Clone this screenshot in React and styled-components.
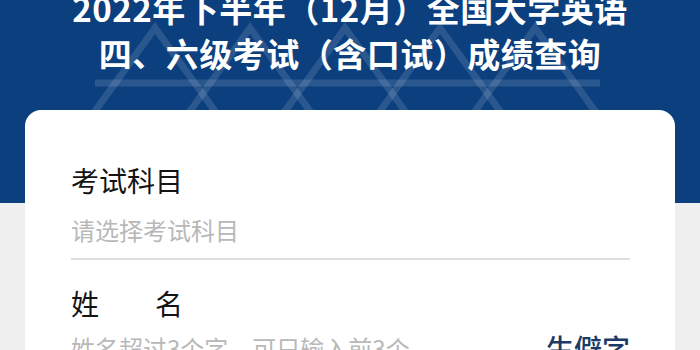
import styled, { createGlobalStyle } from 'styled-components';

const GlobalStyle = createGlobalStyle`
  html, body {
    margin: 0;
    padding: 0;
    background: #efefef;
    overflow: hidden;
  }
  body {
    font-family: "Noto Sans CJK SC", "Noto Sans", sans-serif;
  }
`;

const Page = styled.main`
  width: 700px;
  height: 350px;
  overflow: hidden;
  background: #efefef;
`;

/**
 * HEADER
 */

const Header = styled.header`
  position: relative;
  height: 203px;
  background: #0b3f7e;
  overflow: hidden;
`;

const Pattern = styled.svg`
  position: absolute;
  left: 0;
  top: 0;
`;

const Title = styled.h1`
  position: relative;
  margin: -14px 0 0;
  text-align: center;
  color: #ffffff;
  font-size: 33px;
  font-weight: 700;
  line-height: 45px;
  letter-spacing: 0.5px;
`;

/**
 * CARD
 */

const Card = styled.section`
  position: relative;
  margin: -93px 25px 0;
  height: 260px;
  padding: 50px 45px 0 46px;
  background: #ffffff;
  border-radius: 16px 16px 0 0;
  box-sizing: border-box;
`;

const Field = styled.div`
  display: flex;
  flex-direction: column;
  border-bottom: ${(props) => (props.divided ? '2px solid #dedede' : 'none')};
  padding-bottom: ${(props) => (props.divided ? '10px' : '0')};
  margin-bottom: 23px;
`;

const Label = styled.div`
  font-size: 28px;
  line-height: 40px;
  color: #141414;
`;

const Spaced = styled.span`
  display: inline-block;
  width: 84px;
`;

const Placeholder = styled.div`
  margin-top: 12px;
  font-size: 24px;
  line-height: 36px;
  color: #b8b8b8;
`;

const HintRow = styled.div`
  display: flex;
  justify-content: space-between;
  align-items: center;
  margin-top: 7px;
`;

const Hint = styled.span`
  font-size: 24px;
  line-height: 36px;
  color: #b8b8b8;
`;

const RareLink = styled.span`
  font-size: 28px;
  line-height: 36px;
  font-weight: 500;
  color: #1b3a66;
`;

const peaks = [155, 250, 345, 440, 535];

export default function App() {
  return (
    <Page>
      <GlobalStyle />
      <Header>
        <Pattern width="700" height="203" viewBox="0 0 700 203">
          <g stroke="rgba(255,255,255,0.13)" strokeWidth="7" fill="none">
            {peaks.map((x) => (
              <path key={x} d={`M${x - 70} 125 L${x} 28 L${x + 70} 125`} />
            ))}
            <path d="M95 83 L600 83" />
          </g>
        </Pattern>
        <Title>
          2022年下半年（12月）全国大学英语
          <br />
          四、六级考试（含口试）成绩查询
        </Title>
      </Header>
      <Card>
        <Field divided>
          <Label>考试科目</Label>
          <Placeholder>请选择考试科目</Placeholder>
        </Field>
        <Field>
          <Label>
            <Spaced>姓</Spaced>名
          </Label>
          <HintRow>
            <Hint>姓名超过3个字，可只输入前3个</Hint>
            <RareLink>生僻字</RareLink>
          </HintRow>
        </Field>
      </Card>
    </Page>
  );
}
